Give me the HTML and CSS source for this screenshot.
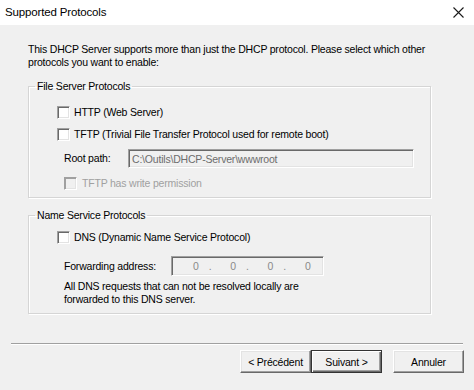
FILE: index.html
```html
<!DOCTYPE html>
<html>
<head>
<meta charset="utf-8">
<link rel="stylesheet" href="styles.css">
</head>
<body>
<div class="window">
  <div class="titlebar">
    <span class="title">Supported Protocols</span>
    <span class="close">
      <svg class="close-icon" width="11" height="11" viewBox="0 0 11 11"><path d="M0.5 0.5 L10.5 10.5 M10.5 0.5 L0.5 10.5" stroke="#1a1a1a" stroke-width="1.1" fill="none"/></svg>
    </span>
  </div>
  <div class="client">
    <p class="intro">This DHCP Server supports more than just the DHCP protocol. Please select which other<br>protocols you want to enable:</p>

    <fieldset class="group group-file">
      <legend>File Server Protocols</legend>
      <div class="row check-row r-http"><span class="cb"></span><span class="lbl">HTTP (Web Server)</span></div>
      <div class="row check-row r-tftp"><span class="cb"></span><span class="lbl">TFTP (Trivial File Transfer Protocol used for remote boot)</span></div>
      <div class="row field-row r-root"><span class="flabel root-lbl">Root path:</span><span class="edit root-edit">C:\Outils\DHCP-Server\wwwroot</span></div>
      <div class="row check-row sub r-write"><span class="cb disabled"></span><span class="lbl dim">TFTP has write permission</span></div>
    </fieldset>

    <fieldset class="group group-name">
      <legend>Name Service Protocols</legend>
      <div class="row check-row r-dns"><span class="cb"></span><span class="lbl">DNS (Dynamic Name Service Protocol)</span></div>
      <div class="row field-row r-fwd"><span class="flabel fwd-lbl">Forwarding address:</span>
        <span class="edit ip">
          <span class="seg">0<i>.</i></span><span class="seg">0<i>.</i></span><span class="seg">0<i>.</i></span><span class="seg">0</span>
        </span>
      </div>
      <p class="note">All DNS requests that can not be resolved locally are<br>forwarded to this DNS server.</p>
    </fieldset>

    <div class="separator"></div>

    <div class="buttons">
      <button class="btn">&lt; Précédent</button>
      <button class="btn default">Suivant &gt;</button>
      <button class="btn cancel">Annuler</button>
    </div>
  </div>
</div>
</body>
</html>
```
FILE: styles.css
```css
html, body {
  margin: 0;
  padding: 0;
}
body {
  width: 474px;
  height: 390px;
  overflow: hidden;
  font-family: "Liberation Sans", Arial, sans-serif;
  font-size: 10.5px;
  letter-spacing: -0.2px;
  color: #000;
}
.window {
  width: 474px;
  height: 390px;
  display: flex;
  flex-direction: column;
  background: #f0f0f0;
}
.titlebar {
  width: 474px;
  box-sizing: border-box;
  height: 25px;
  flex: none;
  background: #fff;
  display: flex;
  align-items: center;
  padding: 0 0 0 5px;
}
.title {
  flex: 1;
  font-size: 11.5px;
  letter-spacing: -0.15px;
  color: #000;
  margin-top: -1px;
}
.close {
  width: 21px;
  flex: none;
  display: flex;
  justify-content: flex-start;
  margin-top: -1px;
}
.close-icon {
  width: 11px;
  height: 11px;
  flex: none;
}
.client {
  flex: 1;
  display: flex;
  flex-direction: column;
  padding-top: 18px;
}
.intro {
  margin: 0 0 0 28px;
  line-height: 13px;
}
.group {
  margin: 11px 0 0 28px;
  width: 403px;
  box-sizing: border-box;
  padding: 0;
  border: 1px solid #d5d5d5;
  box-shadow: 1px 1px 0 #fff, inset 1px 1px 0 #fff;
  min-inline-size: 0;
}
.group-name {
  margin-top: 11px;
}
.group legend {
  margin-left: 6px;
  padding: 0 2px;
  line-height: 13px;
}
.row {
  display: flex;
  align-items: center;
}
.check-row {
  height: 13px;
  padding-left: 28px;
}
.check-row.sub {
  padding-left: 35px;
}
.r-http { margin-top: 13px; }
.r-tftp { margin-top: 9px; }
.r-root { margin-top: 8px; }
.r-write { margin-top: 9px; margin-bottom: 7px; }
.r-dns { margin-top: 9px; }
.r-fwd { margin-top: 12px; }

.cb {
  width: 13px;
  height: 13px;
  box-sizing: border-box;
  background: #fff;
  border: 1px solid;
  border-color: #a0a0a0 #fff #fff #a0a0a0;
  box-shadow: inset 1px 1px 0 #696969, inset -1px -1px 0 #e3e3e3;
  flex: none;
}
.cb.disabled {
  background: #f0f0f0;
  box-shadow: inset 1px 1px 0 #a0a0a0, inset -1px -1px 0 #e3e3e3;
}
.lbl {
  margin-left: 4px;
  line-height: 13px;
}
.dim {
  color: #a0a0a0;
  margin-left: 5px;
}
.field-row {
  padding-left: 35px;
}
.flabel {
  flex: none;
  line-height: 13px;
}
.root-lbl { width: 64px; }
.fwd-lbl { width: 107px; }
.edit {
  box-sizing: border-box;
  background: #f0f0f0;
  border: 1px solid;
  border-color: #a0a0a0 #fff #fff #a0a0a0;
  box-shadow: inset 1px 1px 0 #696969, inset -1px -1px 0 #e3e3e3;
  color: #6d6d6d;
  display: flex;
  align-items: center;
}
.root-edit {
  width: 286px;
  height: 19px;
  padding-left: 3px;
}
.ip {
  width: 153px;
  height: 20px;
  padding-left: 21px;
  color: #8a8a8a;
}
.seg {
  width: 37.3px;
  flex: none;
  display: flex;
}
.seg i {
  font-style: normal;
  margin-left: 10px;
}
.note {
  margin: 4px 0 7px 35px;
  line-height: 13px;
}
.separator {
  margin: 29px 0 0 11px;
  width: 452px;
  height: 1px;
  background: #a0a0a0;
  border-bottom: 1px solid #fff;
}
.buttons {
  margin-top: 5px;
  display: flex;
  justify-content: flex-end;
  padding-right: 10px;
}
.btn {
  width: 71px;
  height: 23px;
  box-sizing: border-box;
  margin: 0;
  padding: 0;
  font-family: "Liberation Sans", Arial, sans-serif;
  font-size: 10.5px;
  letter-spacing: -0.2px;
  color: #000;
  background: #f0f0f0;
  border: 1px solid;
  border-color: #fff #696969 #696969 #fff;
  box-shadow: inset -1px -1px 0 #a0a0a0, inset 1px 1px 0 #e3e3e3;
}
.btn.default {
  border-color: #333;
  box-shadow: inset 1px 1px 0 #fff, inset -1px -1px 0 #696969, inset -2px -2px 0 #a0a0a0;
}
.btn.cancel {
  margin-left: 11px;
}
```
